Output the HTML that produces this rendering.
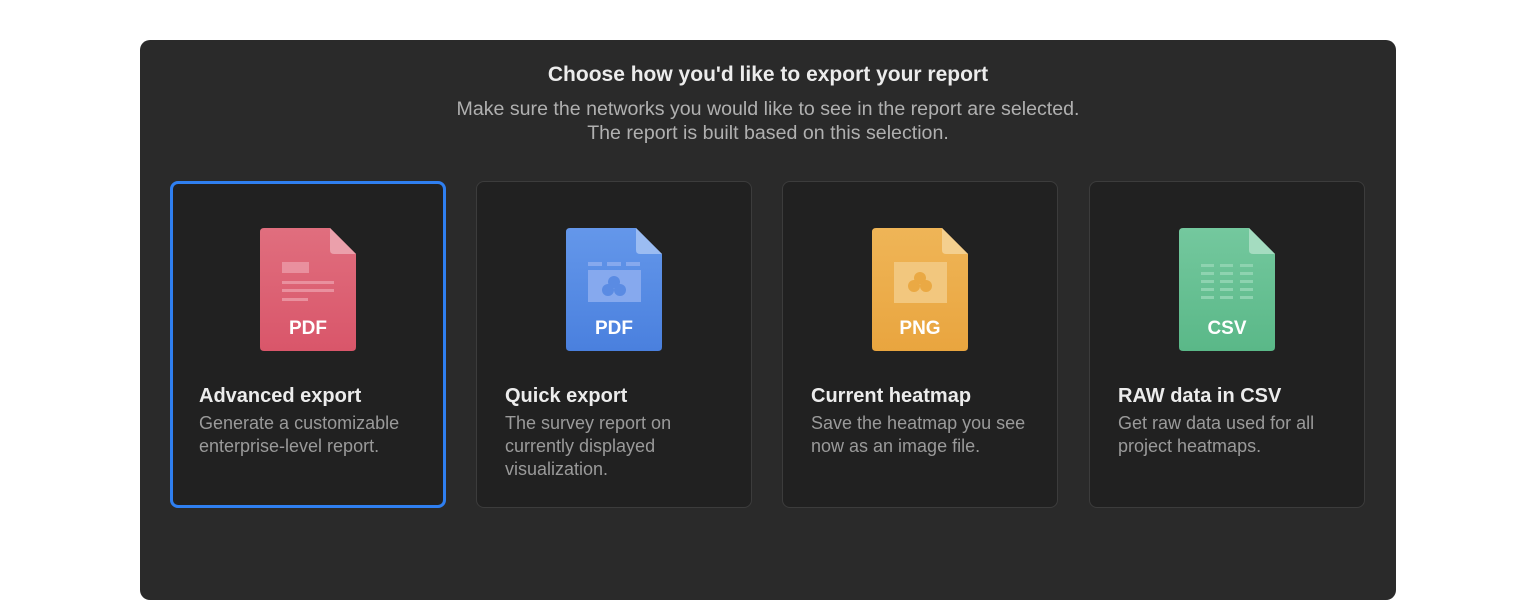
<!DOCTYPE html>
<html><head><style>
body{margin:0;width:1536px;height:569px;background:#fff;font-family:"Liberation Sans",sans-serif;overflow:hidden;position:relative}
.panel{position:absolute;left:140px;top:40px;width:1256px;height:560px;background:#2a2a2a;border-radius:10px}
h1{position:absolute;left:0;right:0;top:63px;margin:0;text-align:center;color:#ececec;font-size:21px;font-weight:bold}
.sub{position:absolute;left:0;right:0;top:97px;text-align:center;color:#b0b0b0;font-size:19.6px;line-height:24px}
.card{position:absolute;top:181px;width:276px;height:327px;background:#212121;border:1px solid #3c3c3c;border-radius:8px;box-sizing:border-box}
.card.sel{border:3px solid #2f7ff0}
.card svg{position:absolute;left:89px;top:46px}
.card.sel svg{left:87px;top:44px}
.t{position:absolute;left:28px;top:203px;color:#ececec;font-size:20px;font-weight:bold}
.d{position:absolute;left:28px;top:230px;color:#9a9a9a;font-size:18px;line-height:23px;width:225px}
.sel .t{left:26px;top:201px}.sel .d{left:26px;top:228px}
</style></head><body>
<div class="panel"></div>
<h1>Choose how you'd like to export your report</h1>
<div class="sub">Make sure the networks you would like to see in the report are selected.<br>The report is built based on this selection.</div>

<div class="card sel" style="left:170px">
<svg width="96" height="123" viewBox="0 0 96 123"><defs><linearGradient id="r" x1="0" y1="0" x2="0" y2="1"><stop offset="0" stop-color="#e06e7e"/><stop offset="1" stop-color="#d9566a"/></linearGradient></defs>
<path d="M4 0H70L96 26V119Q96 123 92 123H4Q0 123 0 119V4Q0 0 4 0Z" fill="url(#r)"/><path d="M70 0V22Q70 26 74 26H96Z" fill="#eba0ab"/>
<rect x="22" y="34" width="27" height="11" fill="#e9909e"/><rect x="22" y="53" width="52" height="3" fill="#e9909e"/><rect x="22" y="61" width="52" height="3" fill="#e9909e"/><rect x="22" y="70" width="26" height="3" fill="#e9909e"/>
<text x="48" y="106" text-anchor="middle" fill="#fff" font-size="19" font-weight="bold" font-family="Liberation Sans">PDF</text></svg>
<div class="t">Advanced export</div><div class="d">Generate a customizable enterprise-level report.</div></div>

<div class="card" style="left:476px">
<svg width="96" height="123" viewBox="0 0 96 123"><defs><linearGradient id="b" x1="0" y1="0" x2="0" y2="1"><stop offset="0" stop-color="#6497ea"/><stop offset="1" stop-color="#4a80de"/></linearGradient></defs>
<path d="M4 0H70L96 26V119Q96 123 92 123H4Q0 123 0 119V4Q0 0 4 0Z" fill="url(#b)"/><path d="M70 0V22Q70 26 74 26H96Z" fill="#9bbcf2"/>
<rect x="22" y="34" width="14" height="4" fill="#86a9ee"/><rect x="41" y="34" width="14" height="4" fill="#86a9ee"/><rect x="60" y="34" width="14" height="4" fill="#86a9ee"/>
<rect x="22" y="42" width="53" height="32" fill="#86a9ee"/><g fill="#5a8be3"><circle cx="48" cy="54" r="6"/><circle cx="42" cy="62" r="6"/><circle cx="54" cy="62" r="6"/></g>
<text x="48" y="106" text-anchor="middle" fill="#fff" font-size="19" font-weight="bold" font-family="Liberation Sans">PDF</text></svg>
<div class="t">Quick export</div><div class="d">The survey report on currently displayed visualization.</div></div>

<div class="card" style="left:782px">
<svg width="96" height="123" viewBox="0 0 96 123"><defs><linearGradient id="o" x1="0" y1="0" x2="0" y2="1"><stop offset="0" stop-color="#efb557"/><stop offset="1" stop-color="#e9a53f"/></linearGradient></defs>
<path d="M4 0H70L96 26V119Q96 123 92 123H4Q0 123 0 119V4Q0 0 4 0Z" fill="url(#o)"/><path d="M70 0V22Q70 26 74 26H96Z" fill="#f4cf8e"/>
<rect x="22" y="34" width="53" height="41" fill="#f2c77e"/><g fill="#eaa944"><circle cx="48" cy="50" r="6"/><circle cx="42" cy="58" r="6"/><circle cx="54" cy="58" r="6"/></g>
<text x="48" y="106" text-anchor="middle" fill="#fff" font-size="19" font-weight="bold" font-family="Liberation Sans">PNG</text></svg>
<div class="t">Current heatmap</div><div class="d">Save the heatmap you see now as an image file.</div></div>

<div class="card" style="left:1089px">
<svg width="96" height="123" viewBox="0 0 96 123"><defs><linearGradient id="g" x1="0" y1="0" x2="0" y2="1"><stop offset="0" stop-color="#74c89e"/><stop offset="1" stop-color="#5ab888"/></linearGradient></defs>
<path d="M4 0H70L96 26V119Q96 123 92 123H4Q0 123 0 119V4Q0 0 4 0Z" fill="url(#g)"/><path d="M70 0V22Q70 26 74 26H96Z" fill="#a4dcc0"/>
<g fill="#8ed3b0"><rect x="22" y="36" width="13" height="3"/><rect x="41" y="36" width="13" height="3"/><rect x="61" y="36" width="13" height="3"/>
<rect x="22" y="44" width="13" height="3"/><rect x="41" y="44" width="13" height="3"/><rect x="61" y="44" width="13" height="3"/>
<rect x="22" y="52" width="13" height="3"/><rect x="41" y="52" width="13" height="3"/><rect x="61" y="52" width="13" height="3"/>
<rect x="22" y="60" width="13" height="3"/><rect x="41" y="60" width="13" height="3"/><rect x="61" y="60" width="13" height="3"/>
<rect x="22" y="68" width="13" height="3"/><rect x="41" y="68" width="13" height="3"/><rect x="61" y="68" width="13" height="3"/></g>
<text x="48" y="106" text-anchor="middle" fill="#fff" font-size="19" font-weight="bold" font-family="Liberation Sans">CSV</text></svg>
<div class="t">RAW data in CSV</div><div class="d">Get raw data used for all project heatmaps.</div></div>
</body></html>
